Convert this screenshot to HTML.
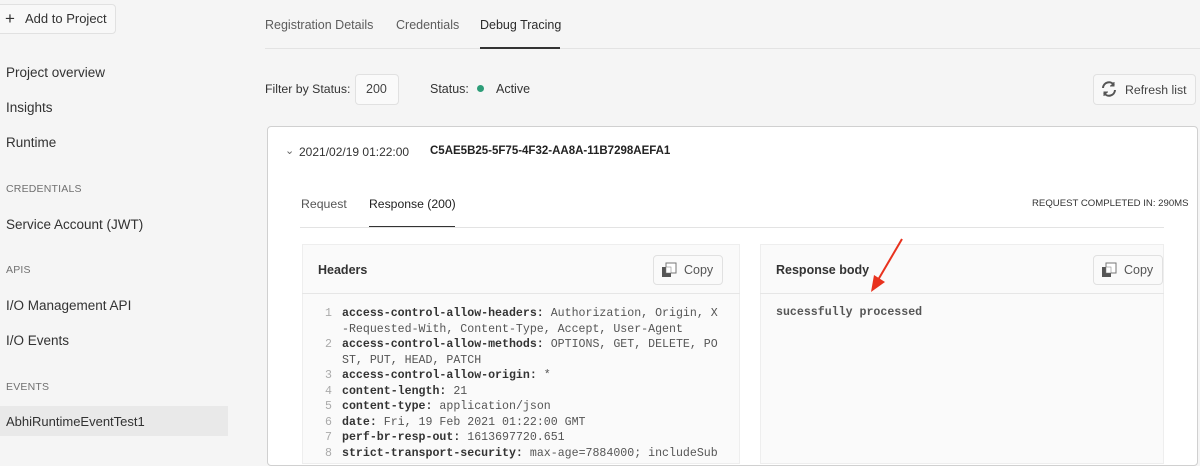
<!DOCTYPE html>
<html><head><meta charset="utf-8">
<style>
*{margin:0;padding:0;box-sizing:border-box}
body{width:1200px;height:450px;overflow:hidden;background:#f5f5f5;font-family:"Liberation Sans",sans-serif;color:#2c2c2c;position:relative}
.a{position:absolute;white-space:nowrap}
.nav{font-size:13.5px;color:#323232}
.sec{font-size:10.5px;color:#707070;letter-spacing:.2px}
.btn{position:absolute;background:#f8f8f8;border:1px solid #e1e1e1;border-radius:4px}
.mono{font-family:"Liberation Mono",monospace;font-size:11.6px;color:#555}
.code div{height:15.5px;line-height:15.5px}
.code b{color:#333}
.ln{color:#aaa;display:inline-block;width:17px}
</style></head><body>
<!-- sidebar -->
<div class="btn" style="left:-4px;top:4px;width:120px;height:30px"></div>
<div class="a" style="left:5px;top:10px;font-size:17px;color:#333;line-height:17px">+</div>
<div class="a nav" style="left:25px;top:11px;font-size:13px">Add to Project</div>
<div class="a nav" style="left:6px;top:65px">Project overview</div>
<div class="a nav" style="left:6px;top:100px">Insights</div>
<div class="a nav" style="left:6px;top:135px">Runtime</div>
<div class="a sec" style="left:6px;top:183px">CREDENTIALS</div>
<div class="a nav" style="left:6px;top:217px">Service Account (JWT)</div>
<div class="a sec" style="left:6px;top:264px">APIS</div>
<div class="a nav" style="left:6px;top:298px">I/O Management API</div>
<div class="a nav" style="left:6px;top:333px">I/O Events</div>
<div class="a sec" style="left:6px;top:381px">EVENTS</div>
<div class="a" style="left:0;top:406px;width:228px;height:30px;background:#e9e9e9"></div>
<div class="a nav" style="left:6px;top:414px;font-size:13px">AbhiRuntimeEventTest1</div>
<!-- tabs -->
<div class="a" style="left:265px;top:18px;font-size:12.5px;color:#5c5c5c">Registration Details</div>
<div class="a" style="left:396px;top:18px;font-size:12.5px;color:#5c5c5c">Credentials</div>
<div class="a" style="left:480px;top:18px;font-size:12.5px;color:#2c2c2c">Debug Tracing</div>
<div class="a" style="left:265px;top:48px;width:935px;height:1px;background:#e3e3e3"></div>
<div class="a" style="left:480px;top:47px;width:80px;height:2px;background:#333"></div>
<!-- filter -->
<div class="a" style="left:265px;top:82px;font-size:12.3px;color:#333">Filter by Status:</div>
<div class="btn" style="left:355px;top:74px;width:44px;height:31px;background:#fafafa"></div>
<div class="a" style="left:366px;top:82px;font-size:12.5px;color:#444">200</div>
<div class="a" style="left:430px;top:82px;font-size:12.5px;color:#333">Status:</div>
<div class="a" style="left:477px;top:85px;width:7px;height:7px;border-radius:50%;background:#2d9d78"></div>
<div class="a" style="left:496px;top:82px;font-size:12.5px;color:#333">Active</div>
<div class="btn" style="left:1093px;top:74px;width:103px;height:31px"></div>
<svg class="a" style="left:1100px;top:80px" width="18" height="18" viewBox="0 0 18 18" fill="none" stroke="#555" stroke-width="2"><path d="M3 8a6 6 0 0 1 11-3"/><path d="M15 10a6 6 0 0 1-11 3"/><path d="M14 2v4h-4" fill="#555" stroke-width="1"/><path d="M4 16v-4h4" fill="#555" stroke-width="1"/></svg>
<div class="a" style="left:1125px;top:83px;font-size:12.3px;color:#444">Refresh list</div>
<!-- card -->
<div class="a" style="left:267px;top:126px;width:931px;height:340px;background:#fff;border:1px solid #d0d0d0;border-radius:4px"></div>
<div class="a" style="left:285px;top:144px;font-size:11px;color:#666">&#8964;</div>
<div class="a" style="left:299px;top:145px;font-size:12px;color:#333">2021/02/19 01:22:00</div>
<div class="a" style="left:430px;top:145px;font-size:11.5px;font-weight:bold;color:#222">C5AE5B25-5F75-4F32-AA8A-11B7298AEFA1</div>
<div class="a" style="left:301px;top:197px;font-size:12.3px;color:#555">Request</div>
<div class="a" style="left:369px;top:197px;font-size:12.2px;color:#222">Response (200)</div>
<div class="a" style="left:369px;top:226px;width:86px;height:2px;background:#333"></div>
<div class="a" style="left:300px;top:227px;width:864px;height:1px;background:#e3e3e3"></div>
<div class="a" style="left:1032px;top:198px;font-size:9.6px;color:#333">REQUEST COMPLETED IN: 290MS</div>
<!-- headers panel -->
<div class="a" style="left:302px;top:244px;width:438px;height:220px;background:#fafafa;border:1px solid #eee"></div>
<div class="a" style="left:302px;top:293px;width:438px;height:1px;background:#e6e6e6"></div>
<div class="a" style="left:318px;top:263px;font-size:12.5px;font-weight:bold;color:#333">Headers</div>
<div class="btn" style="left:653px;top:255px;width:70px;height:30px;background:#fafafa"></div>
<svg class="a" style="left:661px;top:262px" width="16" height="16"><rect x="5" y="1" width="10" height="10" fill="#fff" stroke="#777"/><rect x="1" y="5" width="9" height="10" fill="#555"/><rect x="5" y="5" width="5" height="6" fill="#fff" stroke="#777" stroke-width=".5"/></svg>
<div class="a" style="left:684px;top:263px;font-size:12.5px;color:#555">Copy</div>
<div class="a mono code" style="left:325px;top:306px">
<div><span class="ln">1</span><b>access-control-allow-headers:</b> Authorization, Origin, X</div>
<div><span class="ln"></span>-Requested-With, Content-Type, Accept, User-Agent</div>
<div><span class="ln">2</span><b>access-control-allow-methods:</b> OPTIONS, GET, DELETE, PO</div>
<div><span class="ln"></span>ST, PUT, HEAD, PATCH</div>
<div><span class="ln">3</span><b>access-control-allow-origin:</b> *</div>
<div><span class="ln">4</span><b>content-length:</b> 21</div>
<div><span class="ln">5</span><b>content-type:</b> application/json</div>
<div><span class="ln">6</span><b>date:</b> Fri, 19 Feb 2021 01:22:00 GMT</div>
<div><span class="ln">7</span><b>perf-br-resp-out:</b> 1613697720.651</div>
<div><span class="ln">8</span><b>strict-transport-security:</b> max-age=7884000; includeSub</div>
</div>
<!-- response panel -->
<div class="a" style="left:760px;top:244px;width:404px;height:220px;background:#fafafa;border:1px solid #eee"></div>
<div class="a" style="left:760px;top:293px;width:404px;height:1px;background:#e6e6e6"></div>
<div class="a" style="left:776px;top:263px;font-size:12.5px;font-weight:bold;color:#333">Response body</div>
<div class="btn" style="left:1093px;top:255px;width:70px;height:30px;background:#fafafa"></div>
<svg class="a" style="left:1101px;top:262px" width="16" height="16"><rect x="5" y="1" width="10" height="10" fill="#fff" stroke="#777"/><rect x="1" y="5" width="9" height="10" fill="#555"/><rect x="5" y="5" width="5" height="6" fill="#fff" stroke="#777" stroke-width=".5"/></svg>
<div class="a" style="left:1124px;top:263px;font-size:12.5px;color:#555">Copy</div>
<div class="a mono" style="left:776px;top:306px"><b style="color:#555">sucessfully processed</b></div>
<svg class="a" style="left:865px;top:235px" width="45" height="62"><line x1="37" y1="4" x2="13" y2="45" stroke="#e8321e" stroke-width="2"/><polygon points="6,57 9,40 20,47" fill="#e8321e"/></svg>
</body></html>
